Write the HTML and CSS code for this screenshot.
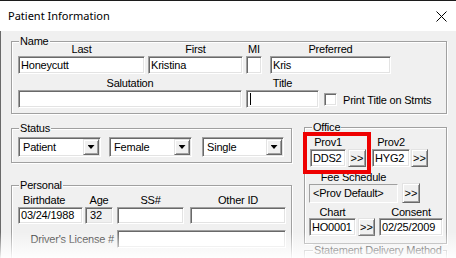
FILE: index.html
```html
<!DOCTYPE html>
<html lang="en">
<head>
  <meta charset="UTF-8">
  <title>Patient Information</title>
  <link rel="stylesheet" href="styles.css">
</head>
<body>

<div class="titlebar">
  <span class="title">Patient Information</span>
  <svg class="close" width="11" height="11" viewBox="0 0 11 11"><path d="M0.5 0.5L10.5 10.5M10.5 0.5L0.5 10.5" stroke="#000" stroke-width="1"/></svg>
</div>

<div class="client">

  <!-- Name -->
  <div class="group name-box">
    <span class="legend">Name</span>
    <div class="row">
      <div class="field w-last"><span class="cap">Last</span><span class="edit">Honeycutt</span></div>
      <div class="field w-first"><span class="cap">First</span><span class="edit">Kristina</span></div>
      <div class="field w-mi"><span class="cap">MI</span><span class="edit"></span></div>
      <div class="field w-pref"><span class="cap">Preferred</span><span class="edit">Kris</span></div>
    </div>
    <div class="row row2">
      <div class="field w-salut"><span class="cap">Salutation</span><span class="edit"></span></div>
      <div class="field w-title"><span class="cap">Title</span><span class="edit"><span class="caret"></span></span></div>
      <label class="check"><span class="box"></span>Print Title on Stmts</label>
    </div>
  </div>

  <div class="lower">
    <div class="left-col">

      <!-- Status -->
      <div class="group status-box">
        <span class="legend">Status</span>
        <div class="row">
          <div class="combo w-patient"><span class="val">Patient</span><span class="drop"></span></div>
          <div class="combo w-female"><span class="val">Female</span><span class="drop"></span></div>
          <div class="combo w-single"><span class="val">Single</span><span class="drop"></span></div>
        </div>
      </div>

      <!-- Personal -->
      <div class="group personal-box">
        <span class="legend">Personal</span>
        <div class="row">
          <div class="field w-birth"><span class="cap left">Birthdate</span><span class="edit short">03/24/1988</span></div>
          <div class="field w-age"><span class="cap">Age</span><span class="edit short readonly">32</span></div>
          <div class="field w-ss"><span class="cap">SS#</span><span class="edit short"></span></div>
          <div class="field w-other"><span class="cap">Other ID</span><span class="edit short"></span></div>
        </div>
        <div class="row dl-row">
          <span class="side-cap">Driver's License #</span>
          <span class="edit w-dl"></span>
        </div>
      </div>
    </div>

    <div class="right-col">

      <!-- Office -->
      <div class="group office-box">
        <span class="legend">Office</span>
        <div class="row">
          <div class="field w-prov1"><span class="cap">Prov1</span><span class="edit">DDS2</span></div>
          <span class="btn b-prov1">&gt;&gt;</span>
          <div class="field w-prov2"><span class="cap">Prov2</span><span class="edit">HYG2</span></div>
          <span class="btn b-prov2">&gt;&gt;</span>
        </div>
        <div class="row fee-row">
          <div class="field w-fee"><span class="cap">Fee Schedule</span><span class="edit readonly fee">&lt;Prov Default&gt;</span></div>
          <span class="btn b-fee">&gt;&gt;</span>
        </div>
        <div class="row chart-row">
          <div class="field w-chart"><span class="cap tight">Chart</span><span class="edit">HO0001</span></div>
          <span class="btn b-chart">&gt;&gt;</span>
          <div class="field w-consent"><span class="cap tight">Consent</span><span class="edit">02/25/2009</span></div>
        </div>
        <div class="highlight"></div>
      </div>

      <div class="group stmt-box"><span class="legend">Statement Delivery Method</span></div>
    </div>
  </div>
</div>

<div class="fade"></div>

</body>
</html>
```

FILE: styles.css
```css
* {
  box-sizing: border-box;
}
body {
  margin: 0;
  width: 456px;
  height: 258px;
  overflow: hidden;
  background: #f0f0f0;
  font-family: "Liberation Sans", Arial, sans-serif;
  font-size: 11px;
  letter-spacing: -0.2px;
  color: #000;
}

/* title bar */
.titlebar {
  height: 31px;
  background: #fff;
  border-top: 1px solid #1c1c1c;
  display: flex;
  align-items: center;
  justify-content: space-between;
  padding: 0 9px 2px 8px;
}
.title {
  font-family: "Noto Sans", sans-serif;
  font-size: 11px;
  letter-spacing: 0;
}
.close {
  display: block;
  margin-top: 2px;
}

.client {
  border-left: 1px solid #6a6a6a;
  padding: 10px 0 0 10px;
  height: 227px;
  overflow: hidden;
}

/* group boxes */
.group {
  position: relative;
  border: 1px solid #a0a0a0;
  box-shadow: inset 1px 1px #fff, 1px 1px #fff;
}
.legend {
  position: absolute;
  top: -7px;
  left: 7px;
  padding: 0 1px;
  line-height: 13px;
  background: #f0f0f0;
  white-space: nowrap;
}
.name-box {
  width: 436px;
  padding: 1px 0 5px 6px;
}
.row {
  display: flex;
  align-items: flex-end;
}
.row2 {
  margin-top: 3px;
}

/* fields */
.field {
  display: flex;
  flex-direction: column;
}
.cap {
  display: block;
  height: 13px;
  line-height: 13px;
  text-align: center;
  white-space: nowrap;
}
.cap.left {
  text-align: left;
  padding-left: 5px;
}
.cap.tight {
  height: 12px;
  line-height: 12px;
}
.edit {
  display: block;
  height: 18px;
  background: #fff;
  border: 1px solid;
  border-color: #a0a0a0 #fff #fff #a0a0a0;
  box-shadow: inset 1px 1px #696969, inset -1px -1px #e3e3e3;
  padding: 1px 0 0 2px;
  line-height: 14px;
  white-space: nowrap;
  overflow: hidden;
}
.edit.short {
  height: 17px;
  padding-top: 0;
}
.edit.readonly {
  background: #f0f0f0;
  padding-left: 4px;
}
.edit.fee {
  height: 19px;
  padding-left: 3px;
  box-shadow: none;
  border-color: #a0a0a0 #fff #fff #a0a0a0;
}
.caret {
  display: inline-block;
  width: 1px;
  height: 12px;
  margin: 1px 0 0 1px;
  background: #000;
}

.w-last { width: 127px; }
.w-first { width: 95px; margin-left: 3px; }
.w-mi { width: 16px; margin-left: 3px; }
.w-pref { width: 121px; margin-left: 8px; }
.w-salut { width: 224px; }
.w-title { width: 73px; margin-left: 4px; }

.check {
  display: flex;
  align-items: center;
  margin: 0 0 2px 5px;
  white-space: nowrap;
}
.check .box {
  width: 13px;
  height: 13px;
  margin-right: 6px;
  background: #fff;
  border: 1px solid;
  border-color: #a0a0a0 #fff #fff #a0a0a0;
  box-shadow: inset 1px 1px #696969, inset -1px -1px #e3e3e3;
}

/* lower area */
.lower {
  display: flex;
  gap: 12px;
  margin-top: 14px;
}
.left-col {
  width: 281px;
}
.right-col {
  width: 143px;
  margin-top: -1px;
}

.status-box {
  padding: 8px 0 5px 6px;
}
.combo {
  display: flex;
  align-items: center;
  height: 20px;
  background: #fff;
  border: 1px solid;
  border-color: #a0a0a0 #fff #fff #a0a0a0;
  box-shadow: inset 1px 1px #696969, inset -1px -1px #e3e3e3;
  padding: 1px;
}
.combo .val {
  flex: 1;
  padding-left: 3px;
}
.drop {
  width: 16px;
  height: 16px;
  display: flex;
  align-items: center;
  justify-content: center;
  background: #f0f0f0;
  border: 1px solid;
  border-color: #e3e3e3 #696969 #696969 #e3e3e3;
  box-shadow: inset 1px 1px #fff, inset -1px -1px #a0a0a0;
}
.drop::after {
  content: "";
  width: 7px;
  height: 4px;
  background: #000;
  clip-path: polygon(0 0, 100% 0, 50% 100%);
}
.w-patient { width: 83px; }
.w-female { width: 83px; margin-left: 8px; }
.w-single { width: 82px; margin-left: 10px; }

.personal-box {
  margin-top: 22px;
  padding: 8px 0 20px 6px;
}
.w-birth { width: 65px; }
.w-age { width: 28px; margin-left: 2px; }
.w-ss { width: 67px; margin-left: 4px; }
.w-other { width: 96px; margin-left: 6px; }
.dl-row {
  align-items: center;
  margin-top: 6px;
}
.side-cap {
  width: 96px;
  text-align: right;
  margin-right: 3px;
  white-space: nowrap;
  color: #333;
}
.w-dl { width: 169px; }

/* office */
.office-box {
  padding: 8px 0 7px 4px;
}
.btn {
  display: flex;
  align-items: center;
  justify-content: center;
  height: 18px;
  background: #f0f0f0;
  border: 1px solid;
  border-color: #e3e3e3 #696969 #696969 #e3e3e3;
  box-shadow: inset 1px 1px #fff, inset -1px -1px #a0a0a0;
  letter-spacing: 0;
}
.w-prov1 { width: 36px; margin-left: 1px; }
.b-prov1 { width: 18px; margin-left: 2px; }
.w-prov2 { width: 38px; margin-left: 6px; }
.b-prov2 { width: 17px; margin-left: 1px; }
.fee-row {
  margin-top: 4px;
}
.w-fee { width: 89px; }
.b-fee { width: 18px; height: 20px; margin-left: 4px; }
.chart-row {
  margin-top: 3px;
}
.w-chart { width: 47px; }
.b-chart { width: 17px; margin-left: 2px; }
.w-consent { width: 64px; margin-left: 4px; }

.highlight {
  position: absolute;
  left: -2px;
  top: 4px;
  width: 68px;
  height: 42px;
  border: 4px solid #ee0000;
}

.stmt-box {
  margin-top: 6px;
  height: 30px;
}
.stmt-box .legend {
  left: 8px;
}

.fade {
  position: absolute;
  left: 0;
  top: 232px;
  width: 456px;
  height: 26px;
  background: linear-gradient(rgba(255, 255, 255, 0), rgba(255, 255, 255, 0.92));
}
```
